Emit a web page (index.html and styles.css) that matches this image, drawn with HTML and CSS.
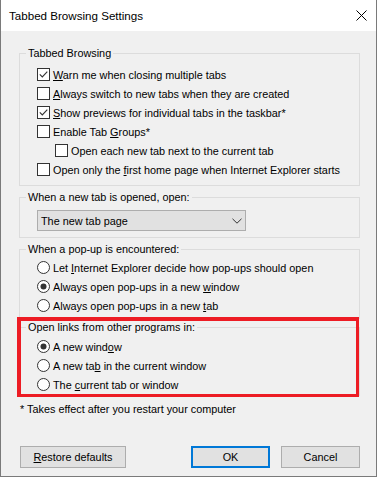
FILE: index.html
```html
<!DOCTYPE html>
<html>
<head>
<meta charset="utf-8">
<link rel="stylesheet" href="styles.css">
</head>
<body>
<div class="dialog">
  <div class="titlebar">
    <span class="title">Tabbed Browsing Settings</span>
    <svg class="close" width="11" height="11" viewBox="0 0 11 11"><path d="M0.5 0.5L10.5 10.5M10.5 0.5L0.5 10.5" stroke="#000" stroke-width="1" fill="none"/></svg>
  </div>
  <div class="content">
    <fieldset class="group">
      <legend>Tabbed Browsing</legend>
      <div class="opts opts-g1">
        <div class="opt"><svg class="box" viewBox="0 0 13 13"><rect x="0.5" y="0.5" width="12" height="12" fill="#fff" stroke="#333"/><path d="M2.8 6.4L5.3 8.9L10.3 3.6" fill="none" stroke="#333" stroke-width="1.1"/></svg><span><u>W</u>arn me when closing multiple tabs</span></div>
        <div class="opt"><svg class="box" viewBox="0 0 13 13"><rect x="0.5" y="0.5" width="12" height="12" fill="#fff" stroke="#333"/></svg><span><u>A</u>lways switch to new tabs when they are created</span></div>
        <div class="opt"><svg class="box" viewBox="0 0 13 13"><rect x="0.5" y="0.5" width="12" height="12" fill="#fff" stroke="#333"/><path d="M2.8 6.4L5.3 8.9L10.3 3.6" fill="none" stroke="#333" stroke-width="1.1"/></svg><span><u>S</u>how previews for individual tabs in the taskbar*</span></div>
        <div class="opt"><svg class="box" viewBox="0 0 13 13"><rect x="0.5" y="0.5" width="12" height="12" fill="#fff" stroke="#333"/></svg><span>Enable Tab <u>G</u>roups*</span></div>
        <div class="opt indent"><svg class="box" viewBox="0 0 13 13"><rect x="0.5" y="0.5" width="12" height="12" fill="#fff" stroke="#333"/></svg><span>Open each new tab next to the current tab</span></div>
        <div class="opt"><svg class="box" viewBox="0 0 13 13"><rect x="0.5" y="0.5" width="12" height="12" fill="#fff" stroke="#333"/></svg><span>Open only the <u>f</u>irst home page when Internet Explorer starts</span></div>
      </div>
    </fieldset>

    <fieldset class="group g2">
      <legend>When a new tab is opened, open:</legend>
      <div class="select">
        <span>The new tab page</span>
        <svg class="chev" width="10" height="6" viewBox="0 0 10 6"><path d="M0.5 0.8L5 5.2L9.5 0.8" fill="none" stroke="#333" stroke-width="1"/></svg>
      </div>
    </fieldset>

    <fieldset class="group g3">
      <legend>When a pop-up is encountered:</legend>
      <div class="opts opts-g3">
        <div class="opt"><svg class="box" viewBox="0 0 13 13"><circle cx="6.5" cy="6.5" r="6" fill="#fff" stroke="#333"/></svg><span>Let <u>I</u>nternet Explorer decide how pop-ups should open</span></div>
        <div class="opt"><svg class="box" viewBox="0 0 13 13"><circle cx="6.5" cy="6.5" r="6" fill="#fff" stroke="#333"/><circle cx="6.5" cy="6.5" r="3" fill="#333"/></svg><span>Always open pop-ups in a new <u>w</u>indow</span></div>
        <div class="opt"><svg class="box" viewBox="0 0 13 13"><circle cx="6.5" cy="6.5" r="6" fill="#fff" stroke="#333"/></svg><span>Always open pop-ups in a new <u>t</u>ab</span></div>
      </div>
    </fieldset>

    <fieldset class="group g4">
      <legend>Open links from other programs in:</legend>
      <div class="opts opts-g4">
        <div class="opt"><svg class="box" viewBox="0 0 13 13"><circle cx="6.5" cy="6.5" r="6" fill="#fff" stroke="#333"/><circle cx="6.5" cy="6.5" r="3" fill="#333"/></svg><span>A new wind<u>o</u>w</span></div>
        <div class="opt"><svg class="box" viewBox="0 0 13 13"><circle cx="6.5" cy="6.5" r="6" fill="#fff" stroke="#333"/></svg><span>A new ta<u>b</u> in the current window</span></div>
        <div class="opt"><svg class="box" viewBox="0 0 13 13"><circle cx="6.5" cy="6.5" r="6" fill="#fff" stroke="#333"/></svg><span>The <u>c</u>urrent tab or window</span></div>
      </div>
    </fieldset>

    <p class="note">* Takes effect after you restart your computer</p>

    <div class="buttons">
      <div class="btn btn-restore"><span><u>R</u>estore defaults</span></div>
      <div class="btn btn-ok">OK</div>
      <div class="btn btn-cancel">Cancel</div>
    </div>
  </div>
  <div class="highlight"></div>
</div>
</body>
</html>
```

FILE: styles.css
```css
* { box-sizing: border-box; }
html, body { margin: 0; padding: 0; }
body {
  width: 377px;
  height: 477px;
  background: #ffffff;
  font-family: "Liberation Sans", Arial, sans-serif;
  font-size: 10.85px;
  color: #000;
}
.dialog {
  position: relative;
  width: 377px;
  height: 477px;
  border: 1px solid #7a7a7a;
  border-top: none;
  background: #f0f0f0;
  display: flex;
  flex-direction: column;
}
.titlebar {
  height: 31px;
  flex: none;
  background: #fff;
  display: flex;
  align-items: center;
  justify-content: space-between;
  padding: 0 9px 0 8px;
}
.title {
  font-size: 11.6px;
  line-height: 14px;
}
.close { display: block; }
.content {
  flex: 1;
  padding: 15px 16px 8px 18px;
  display: flex;
  flex-direction: column;
}
.group {
  margin: 0;
  padding: 0;
  border: 1px solid #dcdcdc;
  min-width: 0;
}
.group legend {
  margin-left: 6px;
  padding: 0 2px;
  line-height: 14px;
}
.g2 { margin-top: 4px; }
.g3 { margin-top: 4px; }
.g4 { margin-top: 1px; }
.opts {
  display: flex;
  flex-direction: column;
  padding-left: 17px;
}
.opts-g1 { padding-top: 5px; padding-bottom: 6px; }
.opts-g3 { padding-top: 2px; padding-bottom: 3px; }
.opts-g4 { padding-top: 3px; padding-bottom: 1px; }
.opt {
  display: flex;
  align-items: center;
  gap: 3px;
  height: 19px;
  white-space: nowrap;
}
.opt.indent { padding-left: 18px; }
.box {
  width: 13px;
  height: 13px;
  flex: none;
  display: block;
}
.select {
  margin: 6px 0 6px 17px;
  width: 209px;
  height: 21px;
  background: #e1e1e1;
  border: 1px solid #adadad;
  display: flex;
  align-items: center;
  justify-content: space-between;
  padding: 0 3px 0 3px;
}
.chev { display: block; }
.note {
  margin: 6px 0 0 1px;
  line-height: 14px;
}
.buttons {
  margin-top: 30px;
  display: flex;
  gap: 11px;
}
.btn {
  height: 22px;
  background: #e1e1e1;
  border: 1px solid #adadad;
  display: flex;
  align-items: center;
  justify-content: center;
}
.btn-restore { width: 106px; margin-left: 1px; }
.btn-ok { width: 79px; margin-left: auto; border: 2px solid #0078d7; }
.btn-cancel { width: 79px; }
.highlight {
  position: absolute;
  left: 16px;
  top: 317px;
  width: 342px;
  height: 80px;
  border-style: solid;
  border-color: #ed1c24;
  border-width: 4px 3px 3px 4px;
}
```
